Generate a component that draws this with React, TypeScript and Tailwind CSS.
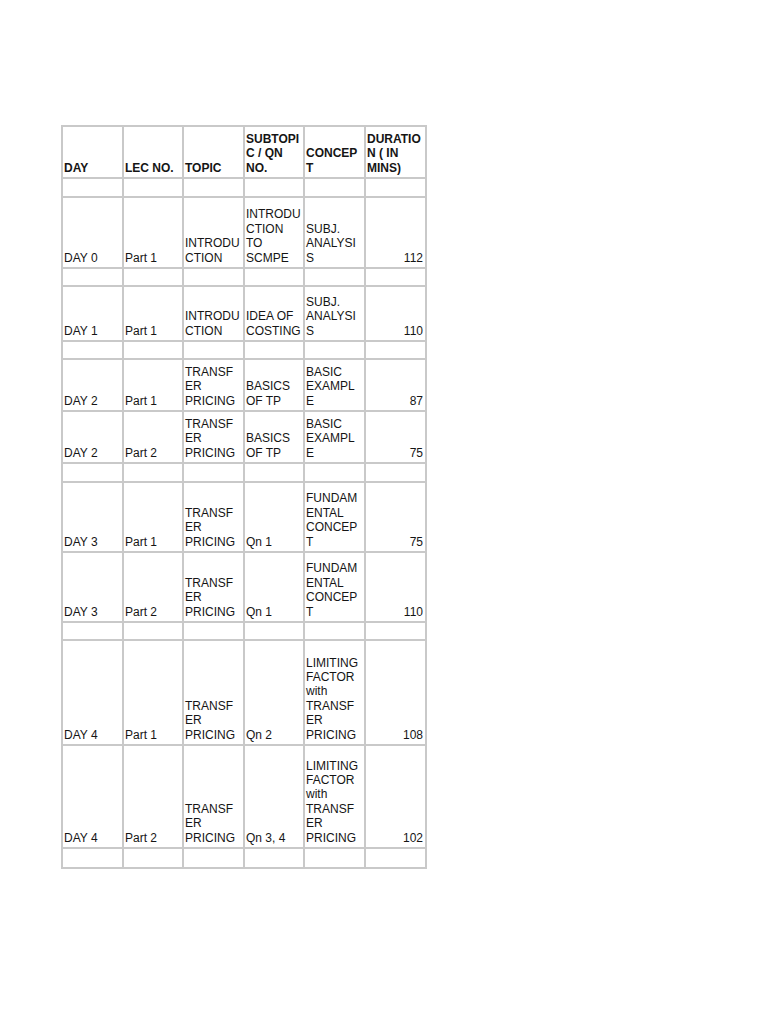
import React from 'react';

type Row = { cells: string[][]; header?: boolean } | null;

const TP = ['TRANSF', 'ER', 'PRICING'];
const LIM = ['LIMITING', 'FACTOR', 'with', 'TRANSF', 'ER', 'PRICING'];
const FUND = ['FUNDAM', 'ENTAL', 'CONCEP', 'T'];

const rows: Row[] = [
  {
    header: true,
    cells: [['DAY'], ['LEC NO.'], ['TOPIC'], ['SUBTOPI', 'C / QN', 'NO.'], ['CONCEP', 'T'], ['DURATIO', 'N ( IN', 'MINS)']],
  },
  null,
  { cells: [['DAY 0'], ['Part 1'], ['INTRODU', 'CTION'], ['INTRODU', 'CTION', 'TO', 'SCMPE'], ['SUBJ.', 'ANALYSI', 'S'], ['112']] },
  null,
  { cells: [['DAY 1'], ['Part 1'], ['INTRODU', 'CTION'], ['IDEA OF', 'COSTING'], ['SUBJ.', 'ANALYSI', 'S'], ['110']] },
  null,
  { cells: [['DAY 2'], ['Part 1'], TP, ['BASICS', 'OF TP'], ['BASIC', 'EXAMPL', 'E'], ['87']] },
  { cells: [['DAY 2'], ['Part 2'], TP, ['BASICS', 'OF TP'], ['BASIC', 'EXAMPL', 'E'], ['75']] },
  null,
  { cells: [['DAY 3'], ['Part 1'], TP, ['Qn 1'], FUND, ['75']] },
  { cells: [['DAY 3'], ['Part 2'], TP, ['Qn 1'], FUND, ['110']] },
  null,
  { cells: [['DAY 4'], ['Part 1'], TP, ['Qn 2'], LIM, ['108']] },
  { cells: [['DAY 4'], ['Part 2'], TP, ['Qn 3, 4'], LIM, ['102']] },
  null,
];

export default function App() {
  return (
    <div
      className="min-h-[1024px] w-[768px] bg-white pl-[61px] pt-[125px] text-[12px] leading-[14.4px] text-[#151515]"
      style={{ fontFamily: '"Liberation Sans", Arial, sans-serif' }}
    >
      <div className="grid w-max grid-cols-[59px_58px_59px_58px_59px_59px] grid-rows-[50px_17px_69px_16px_53px_16px_50px_50px_17px_68px_68px_16px_103px_101px_18px] gap-[2px] bg-[#c9c9c9] p-[2px]">
        {rows.map((row, r) =>
          [0, 1, 2, 3, 4, 5].map((c) => {
            const lines = row ? row.cells[c] : [];
            const numeric = c === 5 && !row?.header;
            return (
              <div
                key={`${r}-${c}`}
                className={`flex flex-col justify-end overflow-visible whitespace-nowrap bg-white pb-[2px] ${
                  numeric ? 'items-end pr-[2px]' : 'pl-px'
                } ${row?.header ? 'font-bold' : ''}`}
              >
                {lines.map((line, i) => (
                  <div key={i}>{line}</div>
                ))}
              </div>
            );
          })
        )}
      </div>
    </div>
  );
}
